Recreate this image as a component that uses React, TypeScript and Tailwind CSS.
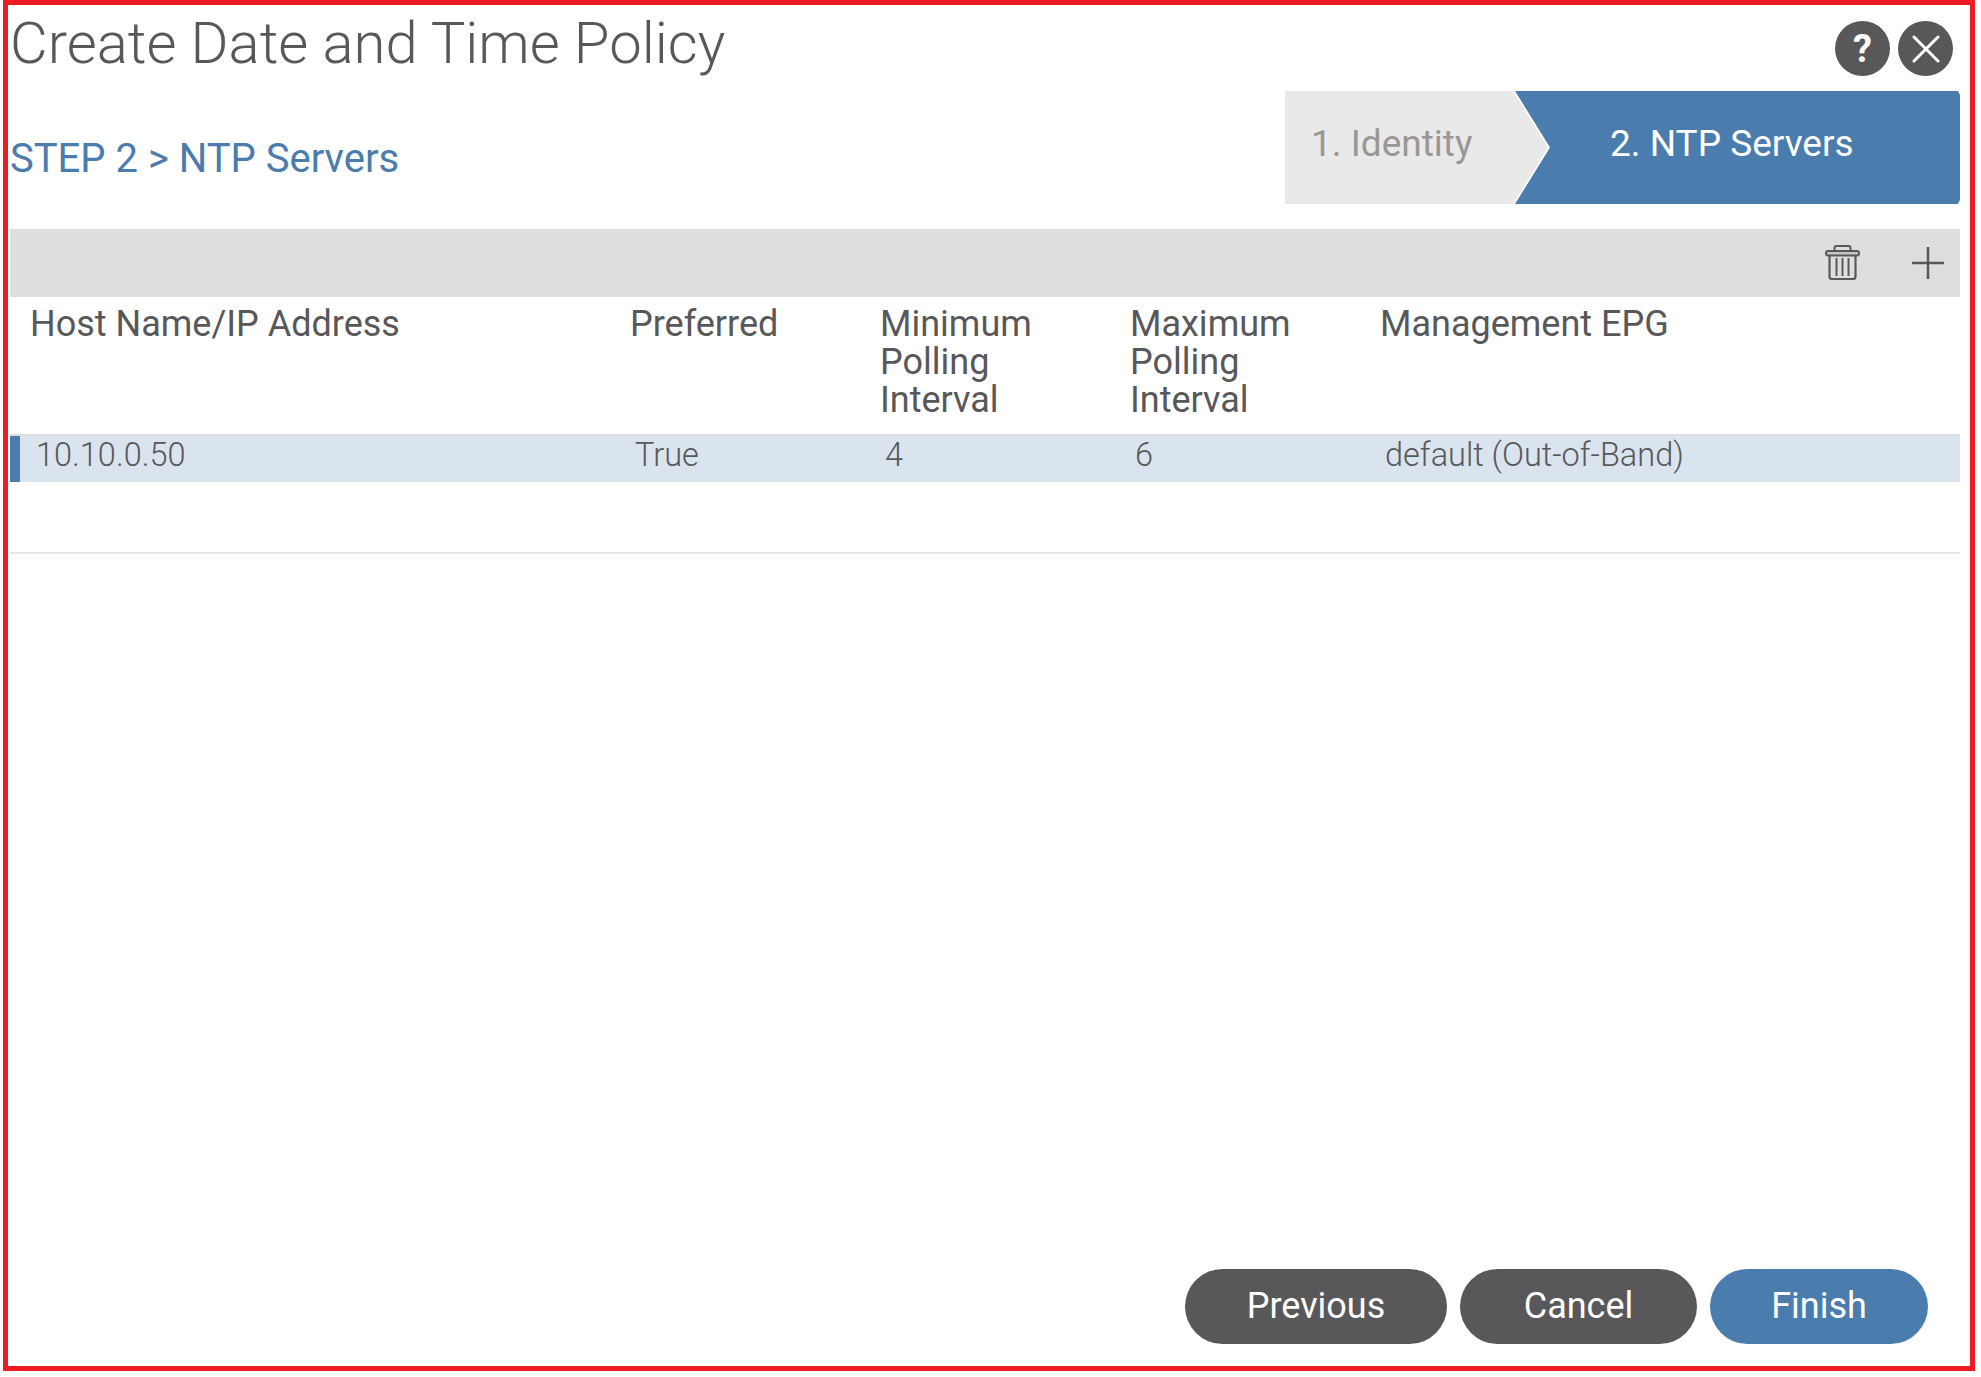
import * as React from "react";

const columns = "grid grid-cols-[600px_251px_250px_250px_1fr]";

function TrashIcon() {
  return (
    <svg width="35" height="35" viewBox="0 0 35 35" fill="none" stroke="#58585a" strokeWidth="2" className="mb-[2px]">
      <path d="M9.500 6V3A2 2 0 0 1 11.500 1H23.500A2 2 0 0 1 25.500 3V6" />
      <rect x="1" y="6" width="33" height="4.500" rx="2" fill="#c4c4c4" />
      <path d="M4.500 10.500V31.500A2.500 2.500 0 0 0 7 34H28A2.500 2.500 0 0 0 30.500 31.500V10.500" strokeWidth="2.200" />
      <path d="M11.500 13V31M17.500 13V31M23.500 13V31" />
    </svg>
  );
}

export default function App() {
  return (
    <div className="h-[1377px] w-[1981px] bg-white pb-[6px] pl-[3px] pr-[6px] font-['Roboto',sans-serif]">
      <div className="flex h-full flex-col border-[5px] border-[#ed1c24] pl-[2px] pr-[10px]">
        {/* Header */}
        <div className="flex h-[224px] justify-between">
          <div>
            <h1 className="mt-[6px] text-[58px] font-light leading-[64px] text-[#58585a]">
              Create Date and Time Policy
            </h1>
            <div className="mt-[62px] text-[40px] leading-[44px] text-[#4a7cad]">STEP 2 &gt; NTP Servers</div>
          </div>
          <div className="flex flex-col items-end">
            <div className="mr-[7px] mt-[16px] flex gap-[8px]">
              <button className="flex h-[55px] w-[55px] items-center justify-center rounded-full bg-[#58585a] text-[38px] font-bold leading-none text-white">
                ?
              </button>
              <button className="flex h-[55px] w-[55px] items-center justify-center rounded-full bg-[#58585a]">
                <svg width="28" height="28" viewBox="0 0 28 28" stroke="white" strokeWidth="3" strokeLinecap="round">
                  <path d="M2 2L26 26M26 2L2 26" />
                </svg>
              </button>
            </div>
            {/* Wizard steps */}
            <div className="mt-[15px] flex h-[113px] w-[675px]">
              <div className="flex w-[263px] items-center bg-[#e9e9e9] pb-[7px] pl-[26px] text-[37px] text-[#9a9695] [clip-path:polygon(0_0,228px_0,263px_50%,228px_100%,0_100%)]">
                1. Identity
              </div>
              <div className="-ml-[33px] flex flex-1 items-center bg-[#4a7cad] pb-[7px] pl-[95px] text-[37px] text-white [clip-path:polygon(0_0,calc(100%-2px)_0,100%_4px,100%_calc(100%-4px),calc(100%-2px)_100%,0_100%,35px_50%)]">
                2. NTP Servers
              </div>
            </div>
          </div>
        </div>

        {/* Toolbar */}
        <div className="flex h-[68px] items-center justify-end gap-[51px] bg-[#dedede] pr-[15px]">
          <TrashIcon />
          <svg width="34" height="34" viewBox="0 0 34 34" stroke="#58585a" strokeWidth="2.500">
            <path d="M17 1V33M1 17H33" />
          </svg>
        </div>

        {/* Table */}
        <div className={`${columns} h-[139px] border-b-2 border-[#dedede] pt-[8px] text-[36px] leading-[38px] text-[#58585a]`}>
          <div className="pl-[20px]">Host Name/IP Address</div>
          <div className="pl-[20px]">Preferred</div>
          <div className="pl-[19px]">
            Minimum
            <br />
            Polling
            <br />
            Interval
          </div>
          <div className="pl-[19px]">
            Maximum
            <br />
            Polling
            <br />
            Interval
          </div>
          <div className="pl-[19px]">Management EPG</div>
        </div>
        <div className={`${columns} h-[46px] items-stretch bg-[#dae4ef] text-[32.500px] font-light leading-[39px] text-[#58585a]`}>
          <div className="border-l-[10px] border-[#4a7cad] pl-[16px]">10.10.0.50</div>
          <div className="pl-[25px]">True</div>
          <div className="pl-[24px]">4</div>
          <div className="pl-[24px]">6</div>
          <div className="pl-[24px]">default (Out-of-Band)</div>
        </div>
        <div className="h-[72px] border-b-2 border-[#e5e5e5]" />

        {/* Footer */}
        <div className="mt-auto mb-[22px] mr-[32px] flex justify-end gap-[13px] text-[36px] text-white">
          <button className="h-[75px] w-[262px] rounded-full bg-[#58585a] pb-[2px]">Previous</button>
          <button className="h-[75px] w-[237px] rounded-full bg-[#58585a] pb-[2px]">Cancel</button>
          <button className="h-[75px] w-[218px] rounded-full bg-[#4a7cad] pb-[2px]">Finish</button>
        </div>
      </div>
    </div>
  );
}
